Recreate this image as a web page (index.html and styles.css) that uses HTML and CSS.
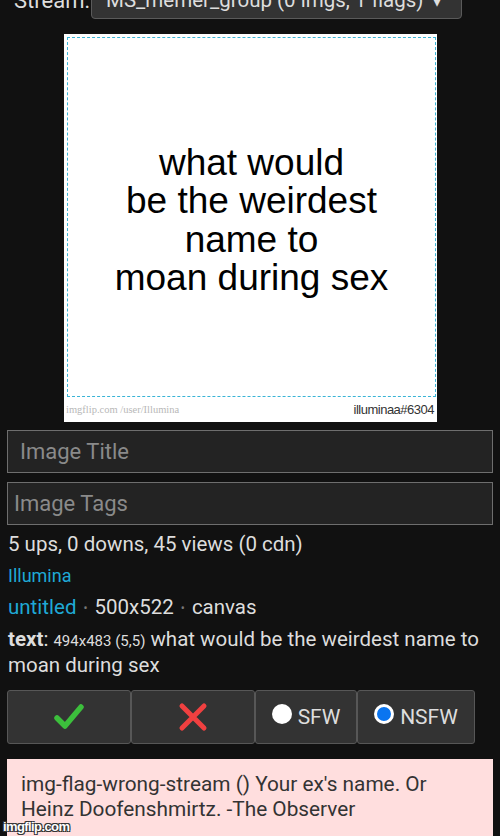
FILE: index.html
```html
<!DOCTYPE html>
<html lang="en">
<head>
<meta charset="UTF-8">
<meta name="viewport" content="width=device-width, initial-scale=1.0">
<title>Flag review</title>
<link rel="stylesheet" href="styles.css">
</head>
<body>
<div class="stream-row">
    <span class="stream-label">Stream:</span>
    <div class="stream-select">MS_memer_group (0 imgs, 1 flags) <span class="caret">&#9662;</span></div>
</div>

<div class="meme-wrap">
    <div class="meme">
        <div class="meme-box">
            <div class="meme-text">what would<br>be the weirdest<br>name to<br>moan during sex</div>
        </div>
        <div class="meme-foot">
            <span class="meme-url">imgflip.com /user/Illumina</span>
            <span class="meme-tag">illuminaa#6304</span>
        </div>
    </div>
</div>

<div class="field title-field">Image Title</div>
<div class="field tags-field">Image Tags</div>

<div class="info">5 ups, 0 downs, 45 views (0 cdn)</div>
<div class="info"><a class="user" href="#">Illumina</a></div>
<div class="info"><a class="link" href="#">untitled</a><span class="dot">&bull;</span>500x522<span class="dot">&bull;</span>canvas</div>
<div class="info text-info"><b>text</b>: <span class="small">494x483 (5,5)</span> what would be the weirdest name to moan during sex</div>

<div class="actions">
    <div class="btn btn-ok">
        <svg width="32" height="28" viewBox="0 0 32 28"><path d="M4 15 L12 23 L28 4" fill="none" stroke="#3cbf3c" stroke-width="5.5" stroke-linecap="round" stroke-linejoin="round"/></svg>
    </div>
    <div class="btn btn-no">
        <svg width="30" height="30" viewBox="0 0 30 30"><path d="M4 4 L26 26 M26 4 L4 26" fill="none" stroke="#f04040" stroke-width="5" stroke-linecap="round"/></svg>
    </div>
    <div class="btn btn-radio"><span class="radio"></span>SFW</div>
    <div class="btn btn-radio nsfw"><span class="radio on"></span>NSFW</div>
</div>

<div class="flag">img-flag-wrong-stream () Your ex's name. Or Heinz Doofenshmirtz. -The Observer</div>

<div class="watermark">imgflip.com</div>
</body>
</html>
```

FILE: styles.css
```css
body, html {
    margin: 0;
    padding: 0;
    background: #111111;
    overflow: hidden;
}

body {
    font-family: Roboto, "Liberation Sans", sans-serif;
    color: #dddddd;
    padding: 0 7px;
    height: 836px;
    position: relative;
}

.stream-row {
    display: flex;
    align-items: center;
    margin-top: -18px;
    height: 37px;
}

.stream-label {
    font-size: 22px;
    padding-left: 7px;
    width: 77px;
}

.stream-select {
    width: 355px;
    height: 35px;
    line-height: 35px;
    border: 1px solid #5a5a5a;
    border-radius: 4px;
    background: #333333;
    font-size: 20.5px;
    padding-left: 14px;
    color: #dddddd;
    white-space: nowrap;
    overflow: hidden;
}

.caret {
    font-size: 16px;
    margin-left: 4px;
}

.meme-wrap {
    display: flex;
    justify-content: center;
    margin-top: 15px;
}

.meme {
    width: 373px;
    height: 388px;
    background: #ffffff;
    display: flex;
    flex-direction: column;
    margin-left: 1px;
}

.meme-box {
    margin: 3px 1px 0 3px;
    height: 360px;
    border: 1px dashed #3ab4d6;
    display: flex;
    align-items: center;
    justify-content: center;
}

.meme-text {
    font-family: "Liberation Sans", Arial, sans-serif;
    font-size: 37px;
    line-height: 38.5px;
    text-align: center;
    color: #000000;
    margin-top: 7px;
}

.meme-foot {
    display: flex;
    justify-content: space-between;
    align-items: center;
    padding: 0 3px 0 2px;
    height: 25px;
}

.meme-url {
    font-family: "Liberation Serif", serif;
    font-size: 10.5px;
    color: #b8b8b8;
}

.meme-tag {
    font-family: "Liberation Sans", Arial, sans-serif;
    font-size: 13px;
    color: #333333;
    letter-spacing: -0.5px;
}

.field {
    height: 41px;
    line-height: 41px;
    border: 1px solid #6e6e6e;
    background: #232323;
    color: #8a8a8a;
    font-size: 22px;
}

.title-field {
    margin-top: 8px;
    padding-left: 12px;
}

.tags-field {
    margin-top: 9px;
    padding-left: 6px;
}

.info {
    font-size: 20.5px;
    line-height: 24px;
    margin-top: 7px;
    padding-left: 1px;
}

.info:first-of-type {
    margin-top: 9px;
}

.user {
    color: #1fa9d6;
    font-size: 18px;
    text-decoration: none;
}

.link {
    color: #1fa9d6;
    text-decoration: none;
}

.dot {
    color: #777777;
    font-size: 12px;
    vertical-align: 2px;
    margin: 0 7px;
}

.small {
    font-size: 15px;
}

.text-info b {
    font-weight: bold;
}

.actions {
    display: flex;
    margin-top: 13px;
    width: 468px;
}

.btn {
    height: 52px;
    border: 1px solid #575757;
    border-radius: 3px;
    background: #333333;
    display: flex;
    align-items: center;
    justify-content: center;
    box-sizing: content-box;
}

.btn-ok, .btn-no {
    width: 122px;
}

.btn-radio {
    width: 100px;
    font-size: 21px;
    color: #dddddd;
}

.btn-radio.nsfw {
    width: 116px;
}

.radio {
    width: 20px;
    height: 20px;
    border-radius: 50%;
    background: #ffffff;
    margin-right: 6px;
    margin-top: -6px;
    box-sizing: border-box;
}

.radio.on {
    background: #0a75f0;
    border: 3px solid #ffffff;
}

.flag {
    margin-top: 15px;
    background: #ffdede;
    color: #333333;
    font-size: 20.8px;
    line-height: 25px;
    padding: 13px 16px 16px 14px;
}

.watermark {
    position: absolute;
    left: 3px;
    bottom: 2px;
    font-family: "Liberation Sans", Arial, sans-serif;
    font-size: 13px;
    font-weight: bold;
    letter-spacing: -0.6px;
    color: #ffffff;
    text-shadow: -1px -1px 0 #333, 1px -1px 0 #333, -1px 1px 0 #333, 1px 1px 0 #333;
}
```
